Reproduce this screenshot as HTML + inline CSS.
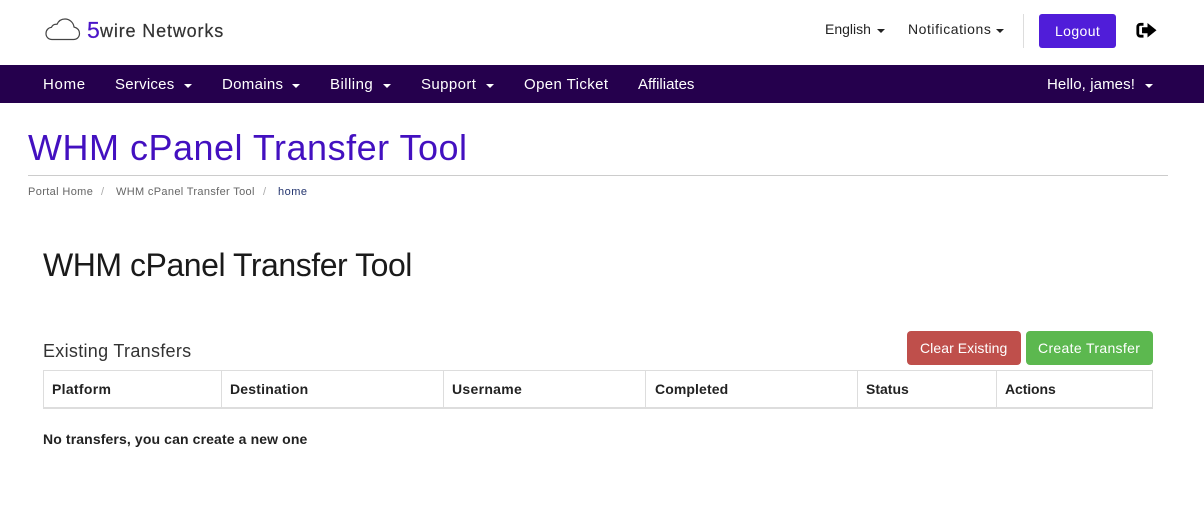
<!DOCTYPE html>
<html><head><meta charset="utf-8"><style>
html,body{margin:0;padding:0;background:#fff;width:1204px;height:522px;overflow:hidden}
body{position:relative;font-family:"Liberation Sans",sans-serif;color:#1a1a1a}
.t{position:absolute;white-space:nowrap;line-height:20px}
.b{position:absolute}
.c{position:absolute;width:0;height:0;border-left:4px solid transparent;border-right:4px solid transparent;border-top:4px solid currentColor}
.n{color:#fff;font-size:15px;top:74.500px}
.h{font-weight:bold;font-size:14px;top:379px;color:#222}
.v{position:absolute;top:371px;height:36px;width:1px;background:#ddd}
</style></head><body>
<svg class="b" style="left:45px;top:18px" width="36" height="24" viewBox="0 0 36 24"><path d="M7 21.500C3.500 21.500 1 19 1 15.500C1 12 3.500 9.500 6.500 9.300C7.500 7 9.500 6 12 6.300C13.500 3 16.500 1 20 1C24.500 1 28.500 4.500 29 9C32.500 10 34.500 12.500 34.500 15.500C34.500 19 32 21.500 28.500 21.500Z" fill="none" stroke="#444" stroke-width="1.200"/></svg>
<div class="t" style="left:87px;top:19px;font-size:23px;color:#4a14c8;line-height:22px;-webkit-text-stroke:.2px #4a14c8">5</div>
<div class="t" style="left:100px;top:21px;font-size:18px;color:#333;letter-spacing:.85px;-webkit-text-stroke:.2px #333">wire Networks</div>
<div class="t" style="left:825px;top:19px;font-size:14px;color:#222">English</div><div class="c" style="left:877px;top:29px;color:#222"></div>
<div class="t" style="left:908px;top:19px;font-size:14px;color:#222;letter-spacing:.55px">Notifications</div><div class="c" style="left:996px;top:29px;color:#222"></div>
<div class="b" style="left:1023px;top:14px;width:1px;height:34px;background:#ddd"></div>
<div class="b" style="left:1039px;top:14px;width:77px;height:34px;background:#501dd9;border-radius:3px"></div>
<div class="t" style="left:1055px;top:21px;font-size:14px;color:#fff;letter-spacing:.4px">Logout</div>
<svg class="b" style="left:1136px;top:21px" width="21" height="18" viewBox="0 0 21 18"><path d="M7.500 3.300H4.500C2.800 3.300 1.800 4.300 1.800 6V12.500C1.800 14.200 2.800 15.200 4.500 15.200H7.500" fill="none" stroke="#000" stroke-width="2.800"/><path d="M6 6.300H11.500V2L20.500 9.200L11.500 16.500V12.200H6Z" fill="#000"/></svg>

<div class="b" style="left:0;top:65px;width:1204px;height:38px;background:#25004d"></div>
<div class="t n" style="left:43px;letter-spacing:.7px">Home</div>
<div class="t n" style="left:115px;letter-spacing:.25px">Services</div><div class="c" style="left:184px;top:84px;color:#fff"></div>
<div class="t n" style="left:222px;letter-spacing:.3px">Domains</div><div class="c" style="left:292px;top:84px;color:#fff"></div>
<div class="t n" style="left:330px;letter-spacing:.45px">Billing</div><div class="c" style="left:383px;top:84px;color:#fff"></div>
<div class="t n" style="left:421px;letter-spacing:.4px">Support</div><div class="c" style="left:486px;top:84px;color:#fff"></div>
<div class="t n" style="left:524px;letter-spacing:.4px">Open Ticket</div>
<div class="t n" style="left:638px">Affiliates</div>
<div class="t n" style="left:1047px;letter-spacing:.1px">Hello, james!</div><div class="c" style="left:1145px;top:84px;color:#fff"></div>

<div class="t" style="left:28px;top:128px;font-size:36px;line-height:40px;color:#4310c0;letter-spacing:.5px">WHM cPanel Transfer Tool</div>
<div class="b" style="left:28px;top:175px;width:1140px;height:1px;background:#ccc"></div>
<div class="t" style="left:28px;top:182px;font-size:11px;color:#666;letter-spacing:.37px">Portal Home</div>
<div class="t" style="left:101px;top:182px;font-size:11px;color:#aaa">/</div>
<div class="t" style="left:116px;top:182px;font-size:11px;color:#666;letter-spacing:.34px">WHM cPanel Transfer Tool</div>
<div class="t" style="left:263px;top:182px;font-size:11px;color:#aaa">/</div>
<div class="t" style="left:278px;top:182px;font-size:11px;color:#23346e;letter-spacing:.5px">home</div>

<div class="t" style="left:43px;top:245px;font-size:32px;line-height:40px;color:#1a1a1a;letter-spacing:-.46px">WHM cPanel Transfer Tool</div>
<div class="t" style="left:43px;top:341px;font-size:18px;color:#333;letter-spacing:.3px">Existing Transfers</div>

<div class="b" style="left:907px;top:331px;width:114px;height:34px;background:#bf4f4b;border-radius:4px"></div>
<div class="t" style="left:920px;top:338px;font-size:14px;color:#fff;letter-spacing:.07px">Clear Existing</div>
<div class="b" style="left:1026px;top:331px;width:127px;height:34px;background:#5cb84f;border-radius:4px"></div>
<div class="t" style="left:1038px;top:338px;font-size:14px;color:#fff;letter-spacing:.33px">Create Transfer</div>

<div class="b" style="left:43px;top:370px;width:1108px;height:36px;border:1px solid #ddd;border-bottom:2px solid #ddd"></div>
<div class="v" style="left:221px"></div><div class="v" style="left:443px"></div><div class="v" style="left:645px"></div><div class="v" style="left:857px"></div><div class="v" style="left:996px"></div>
<div class="t h" style="left:52px;letter-spacing:.3px">Platform</div>
<div class="t h" style="left:230px;letter-spacing:.2px">Destination</div>
<div class="t h" style="left:452px;letter-spacing:.3px">Username</div>
<div class="t h" style="left:655px;letter-spacing:.1px">Completed</div>
<div class="t h" style="left:866px">Status</div>
<div class="t h" style="left:1005px;letter-spacing:-.1px">Actions</div>
<div class="t" style="left:43px;top:429px;font-size:14px;font-weight:bold;color:#222;letter-spacing:.12px">No transfers, you can create a new one</div>
</body></html>
